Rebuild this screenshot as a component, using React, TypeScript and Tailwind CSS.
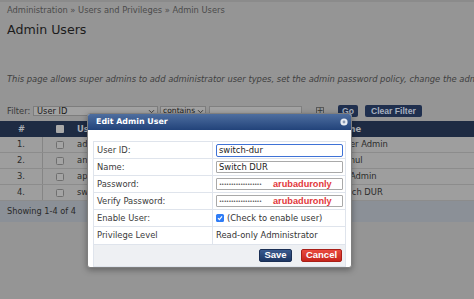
import React from "react";

function Chevron() {
  return (
    <svg width="7" height="5" viewBox="0 0 7 5" className="shrink-0">
      <path d="M1 1.2 L3.5 3.7 L6 1.2" fill="none" stroke="#3a3a3a" strokeWidth="1" />
    </svg>
  );
}

function FormRow({ label, children, last }: { label: string; children: React.ReactNode; last?: boolean }) {
  return (
    <div className={`flex h-[17px] ${last ? "" : "border-b"} border-[#dfe4ec]`}>
      <div className="w-[119px] shrink-0 border-r border-[#dfe4ec] pl-[3px] flex items-center text-[8.4px] text-[#3a3a3a]">{label}</div>
      <div className="flex-1 flex items-center pl-[3px] pr-[3px]">{children}</div>
    </div>
  );
}

function PasswordInput() {
  return (
    <div className="relative w-[127px] h-[12px] border border-[#a9a9a9] rounded-[1px] bg-white flex items-center pl-[2px]">
      <span className="text-[5px] leading-none tracking-[-0.6px] text-[#333]">••••••••••••••••••</span>
      <span className="absolute left-[56px] top-[-1px] font-['Liberation_Sans',sans-serif] font-bold text-[9.2px] leading-[12px] text-[#e2393b]">arubaduronly</span>
    </div>
  );
}

export default function App() {
  const rows = [
    { n: "1.", u: "admin", name: "Super Admin" },
    { n: "2.", u: "anshul", name: "Shanul" },
    { n: "3.", u: "apiuser", name: "API Admin" },
    { n: "4.", u: "switch-dur", name: "Switch DUR" },
  ];
  return (
    <div className="relative w-[474px] h-[299px] overflow-hidden bg-[#959595] font-['DejaVu_Sans',sans-serif] text-[#333]">
      <div className="h-[2px] bg-[#8b8b8b]" />
      <div className="pl-[7px] pt-[3px] h-[13px] text-[8.3px] leading-[10px] text-[#4b4b4b] whitespace-nowrap">
        Administration » Users and Privileges » Admin Users
      </div>
      <div className="pl-[7px] mt-[7px] h-[16px] text-[12.6px] leading-[16px] text-[#1c1c1c] whitespace-nowrap">Admin Users</div>
      <div className="pl-[7px] mt-[36px] h-[10px] text-[8.4px] leading-[10px] italic text-[#404040] whitespace-nowrap">
        This page allows super admins to add administrator user types, set the admin password policy, change the admin password
      </div>

      {/* Filter row */}
      <div className="mt-[20px] h-[14px] flex items-center pl-[7px] text-[8.3px] text-[#3a3a3a] whitespace-nowrap">
        <span className="w-[26px]">Filter:</span>
        <div className="w-[125px] h-[10px] border border-[#7d7d7d] bg-[#a2a2a2] flex items-center justify-between pl-[3px] pr-[2px] text-[#1a1a1a]">
          <span>User ID</span>
          <Chevron />
        </div>
        <div className="ml-[2px] w-[46px] h-[10px] border border-[#7d7d7d] bg-[#a2a2a2] flex items-center justify-between pl-[2px] pr-[1px] text-[7.6px] text-[#1a1a1a]">
          <span>contains</span>
          <Chevron />
        </div>
        <div className="ml-[3px] w-[93px] h-[10px] border border-[#808080] bg-[#a3a3a3]" />
        <div className="ml-[14px] w-[8px] h-[8px] border border-[#5a5a5a] flex items-center justify-center text-[8px] leading-none text-[#333]">+</div>
        <div className="ml-[14px] h-[12px] px-[4px] rounded-[2px] bg-[#1f2f4e] flex items-center font-['Liberation_Sans',sans-serif] font-bold text-[8.6px] text-[#a6b0c0]">Go</div>
        <div className="ml-[7px] h-[12px] px-[6px] rounded-[2px] bg-[#1f2f4e] flex items-center font-['Liberation_Sans',sans-serif] font-bold text-[8.6px] text-[#a6b0c0]">Clear Filter</div>
      </div>

      {/* Table */}
      <div className="mt-[3px]">
        <div className="h-[16px] bg-[#1e2b43] flex items-center text-[8.4px] font-bold text-[#a9adb4]">
          <div className="w-[43px] text-center">#</div>
          <div className="w-[34px] flex justify-center">
            <div className="w-[8px] h-[8px] bg-[#a9a9a9] rounded-[1px]" />
          </div>
          <div className="w-[257px]">User ID</div>
          <div className="flex-1">Name</div>
        </div>
        {rows.map((r) => (
          <div key={r.n} className="h-[16px] bg-[#9e9e9e] border-b border-[#8c8c8c] flex items-center text-[8.4px] text-[#2b2b2b]">
            <div className="w-[43px] h-full border-r border-[#858585] flex items-center justify-center">{r.n}</div>
            <div className="w-[34px] flex justify-center">
              <div className="w-[8px] h-[8px] border border-[#6f6f6f] bg-[#a4a4a4] rounded-[1.5px]" />
            </div>
            <div className="w-[257px]">{r.u}</div>
            <div className="flex-1 whitespace-nowrap">{r.name}</div>
          </div>
        ))}
        <div className="h-[21px] bg-[#8b9097] flex items-center pl-[7px] text-[8.2px] text-[#2a2a2a]">Showing 1-4 of 4</div>
      </div>

      {/* Modal */}
      <div className="absolute left-[87px] top-[113px] w-[265px] h-[155px] bg-white rounded-[3px] border border-[#7e7e7e] shadow-[0_2px_6px_rgba(0,0,0,0.35)] overflow-hidden">
        <div className="h-[16px] bg-gradient-to-b from-[#4e6e9f] to-[#22437a] flex items-center justify-between pl-[8px] pr-[3px]">
          <span className="text-white font-bold text-[7.9px] leading-none">Edit Admin User</span>
          <svg width="8" height="8" viewBox="0 0 8 8">
            <circle cx="4" cy="4" r="3.6" fill="#e8ecf2" />
            <circle cx="4" cy="4" r="1.4" fill="#8a9ab3" />
          </svg>
        </div>
        <div className="px-[5px] pt-[11px]">
          <div className="border border-[#dfe4ec]">
            <FormRow label="User ID:">
              <div className="w-[127px] h-[13px] border-[1.5px] border-[#3f72d6] rounded-[2px] bg-white flex items-center pl-[2px] text-[8.4px] text-[#222]">switch-dur</div>
            </FormRow>
            <FormRow label="Name:">
              <div className="w-[127px] h-[12px] border border-[#a9a9a9] rounded-[1px] bg-white flex items-center pl-[2px] text-[8.4px] text-[#222]">Switch DUR</div>
            </FormRow>
            <FormRow label="Password:">
              <PasswordInput />
            </FormRow>
            <FormRow label="Verify Password:">
              <PasswordInput />
            </FormRow>
            <FormRow label="Enable User:">
              <div className="flex items-center text-[8.4px] text-[#333] whitespace-nowrap">
                <div className="w-[8px] h-[8px] rounded-[1.5px] bg-[#2f7cf6] flex items-center justify-center mr-[3px]">
                  <svg width="6" height="6" viewBox="0 0 6 6">
                    <path d="M1 3.2 L2.4 4.6 L5 1.4" fill="none" stroke="white" strokeWidth="1.2" />
                  </svg>
                </div>
                <span>(Check to enable user)</span>
              </div>
            </FormRow>
            <FormRow label="Privilege Level" last>
              <span className="text-[8.4px] text-[#333] whitespace-nowrap">Read-only Administrator</span>
            </FormRow>
            <div className="h-[22px] bg-[#eef0f3] border-t border-[#dfe4ec] flex items-center justify-end gap-[9px] pr-[3px]">
              <div className="w-[33px] h-[13px] rounded-[2px] border border-[#1a2f55] bg-gradient-to-b from-[#3a5a8f] to-[#1d3764] flex items-center justify-center font-['Liberation_Sans',sans-serif] font-bold text-[9.5px] text-white">Save</div>
              <div className="w-[41px] h-[13px] rounded-[2px] border border-[#a81f18] bg-gradient-to-b from-[#ea4a3e] to-[#c6241b] flex items-center justify-center font-['Liberation_Sans',sans-serif] font-bold text-[9.5px] text-white">Cancel</div>
            </div>
          </div>
        </div>
      </div>
    </div>
  );
}
